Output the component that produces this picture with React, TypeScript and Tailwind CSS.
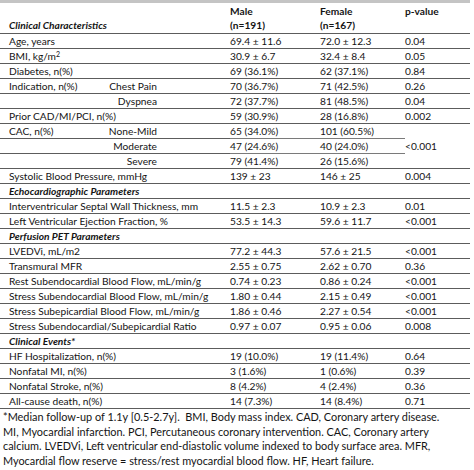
import React from 'react';

type Row = {
  label: React.ReactNode;
  sub?: string;
  male: string;
  female: string;
  p?: string;
  pSpan?: number;
  partial?: boolean;
};

type Section = { title: string; rows: Row[] };

const sections: Section[] = [
  {
    title: 'Clinical Characteristics',
    rows: [
      { label: 'Age, years', male: '69.4 ± 11.6', female: '72.0 ± 12.3', p: '0.04' },
      {
        label: (
          <>
            BMI, kg/m<sup className="text-[7px] leading-none">2</sup>
          </>
        ),
        male: '30.9 ± 6.7',
        female: '32.4 ± 8.4',
        p: '0.05',
      },
      { label: 'Diabetes, n(%)', male: '69 (36.1%)', female: '62 (37.1%)', p: '0.84' },
      { label: 'Indication, n(%)', sub: 'Chest Pain', male: '70 (36.7%)', female: '71 (42.5%)', p: '0.26' },
      { label: '', sub: 'Dyspnea', male: '72 (37.7%)', female: '81 (48.5%)', p: '0.04' },
      { label: 'Prior CAD/MI/PCI, n(%)', male: '59 (30.9%)', female: '28 (16.8%)', p: '0.002' },
      { label: 'CAC, n(%)', sub: 'None-Mild', male: '65 (34.0%)', female: '101 (60.5%)', p: '<0.001', pSpan: 3, partial: true },
      { label: '', sub: 'Moderate', male: '47 (24.6%)', female: '40 (24.0%)', partial: true },
      { label: '', sub: 'Severe', male: '79 (41.4%)', female: '26 (15.6%)' },
      { label: 'Systolic Blood Pressure, mmHg', male: '139 ± 23', female: '146 ± 25', p: '0.004' },
    ],
  },
  {
    title: 'Echocardiographic Parameters',
    rows: [
      { label: 'Interventricular Septal Wall Thickness, mm', male: '11.5 ± 2.3', female: '10.9 ± 2.3', p: '0.01' },
      { label: 'Left Ventricular Ejection Fraction, %', male: '53.5 ± 14.3', female: '59.6 ± 11.7', p: '<0.001' },
    ],
  },
  {
    title: 'Perfusion PET Parameters',
    rows: [
      { label: 'LVEDVi, mL/m2', male: '77.2 ± 44.3', female: '57.6 ± 21.5', p: '<0.001' },
      { label: 'Transmural MFR', male: '2.55 ± 0.75', female: '2.62 ± 0.70', p: '0.36' },
      { label: 'Rest Subendocardial Blood Flow, mL/min/g', male: '0.74 ± 0.23', female: '0.86 ± 0.24', p: '<0.001' },
      { label: 'Stress Subendocardial Blood Flow, mL/min/g', male: '1.80 ± 0.44', female: '2.15 ± 0.49', p: '<0.001' },
      { label: 'Stress Subepicardial Blood Flow, mL/min/g', male: '1.86 ± 0.46', female: '2.27 ± 0.54', p: '<0.001' },
      { label: 'Stress Subendocardial/Subepicardial Ratio', male: '0.97 ± 0.07', female: '0.95 ± 0.06', p: '0.008' },
    ],
  },
  {
    title: 'Clinical Events*',
    rows: [
      { label: 'HF Hospitalization, n(%)', male: '19 (10.0%)', female: '19 (11.4%)', p: '0.64' },
      { label: 'Nonfatal MI, n(%)', male: '3 (1.6%)', female: '1 (0.6%)', p: '0.39' },
      { label: 'Nonfatal Stroke, n(%)', male: '8 (4.2%)', female: '4 (2.4%)', p: '0.36' },
      { label: 'All-cause death, n(%)', male: '14 (7.3%)', female: '14 (8.4%)', p: '0.71' },
    ],
  },
];

const cell = 'h-[15px] p-0 align-middle leading-[14px] whitespace-nowrap';

export default function App() {
  return (
    <div className="w-[474px] bg-white text-[#141414] text-[10.2px]" style={{ fontFamily: 'Lato, "Noto Sans", sans-serif' }}>
      <table className="w-[470px] table-fixed border-collapse border-t-[3px] border-t-[#c4c4c4]">
        <colgroup>
          <col className="w-[230px]" />
          <col className="w-[90px]" />
          <col className="w-[85px]" />
          <col className="w-[65px]" />
        </colgroup>
        <tbody>
          {sections.map((section, si) => (
            <React.Fragment key={section.title}>
              {si === 0 ? (
                <tr className="border-b border-[#5c5c5c]">
                  <td className="p-0 pl-[9px] pb-[1px] align-bottom leading-[14px] font-bold italic">{section.title}</td>
                  <td className="p-0 pt-[1px] pb-[1px] align-top leading-[14px] font-bold">
                    Male
                    <br />
                    (n=191)
                  </td>
                  <td className="p-0 pt-[1px] pb-[1px] align-top leading-[14px] font-bold">
                    Female
                    <br />
                    (n=167)
                  </td>
                  <td className="p-0 pt-[1px] align-top leading-[14px] font-bold">p-value</td>
                </tr>
              ) : (
                <tr className="border-b border-[#5c5c5c]">
                  <td className={`${cell} pl-[9px] font-bold italic`} colSpan={4}>
                    {section.title}
                  </td>
                </tr>
              )}
              {section.rows.map((row, ri) => (
                <tr key={ri}>
                  <td className={`${cell} pl-[9px] border-b border-[#5c5c5c]`}>
                    <div className="flex">
                      <span className="w-[96px] shrink-0">{row.label}</span>
                      {row.sub && <span className="w-[52px] shrink-0 text-right">{row.sub}</span>}
                    </div>
                  </td>
                  <td className={`${cell} border-b ${row.partial ? 'border-[#7a7a7a]' : 'border-[#5c5c5c]'}`}>{row.male}</td>
                  <td className={`${cell} border-b ${row.partial ? 'border-[#7a7a7a]' : 'border-[#5c5c5c]'}`}>{row.female}</td>
                  {row.p !== undefined && (
                    <td className={`${cell} border-b border-[#5c5c5c]`} rowSpan={row.pSpan ?? 1}>
                      {row.p}
                    </td>
                  )}
                </tr>
              ))}
            </React.Fragment>
          ))}
        </tbody>
      </table>
      <p className="pl-[3px] pt-[1px] text-[10.9px] leading-[14.7px] whitespace-nowrap">
        *Median follow-up of 1.1y [0.5-2.7y].&nbsp; BMI, Body mass index. CAD, Coronary artery disease.
        <br />
        MI, Myocardial infarction. PCI, Percutaneous coronary intervention. CAC, Coronary artery
        <br />
        calcium. LVEDVi, Left ventricular end-diastolic volume indexed to body surface area. MFR,
        <br />
        Myocardial flow reserve = stress/rest myocardial blood flow. HF, Heart failure.
      </p>
    </div>
  );
}
